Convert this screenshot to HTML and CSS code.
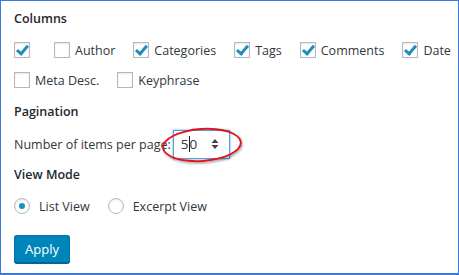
FILE: index.html
```html
<!DOCTYPE html>
<html lang="en">
<head>
  <meta charset="UTF-8">
  <title>Screen Options</title>
  <link rel="stylesheet" href="styles.css">
</head>
<body>
  <div class="panel">
    <h3>Columns</h3>
    <div class="opts">
      <label class="opt bare"><span class="cb on"></span></label>
      <label class="opt"><span class="cb"></span>Author</label>
      <label class="opt"><span class="cb on"></span>Categories</label>
      <label class="opt"><span class="cb on"></span>Tags</label>
      <label class="opt"><span class="cb on"></span>Comments</label>
      <label class="opt"><span class="cb on"></span>Date</label>
    </div>
    <div class="opts">
      <label class="opt"><span class="cb"></span>Meta Desc.</label>
      <label class="opt"><span class="cb"></span>Keyphrase</label>
    </div>

    <h3>Pagination</h3>
    <div class="per-page">
      <span>Number of items per page:</span>
      <div class="num-wrap">
        <div class="num"><span class="val">5<i class="caret"></i>0</span>
          <svg class="spin" width="8" height="12" viewBox="0 0 8 12"><path d="M4 1L7.5 5H0.5Z M4 11L7.5 7H0.5Z" fill="#444"/></svg>
        </div>
        <div class="ring"></div>
      </div>
    </div>

    <h3 class="mode">View Mode</h3>
    <div class="opts">
      <label class="opt"><span class="rd on"></span>List View</label>
      <label class="opt"><span class="rd"></span>Excerpt View</label>
    </div>

    <button class="btn-apply">Apply</button>
  </div>
</body>
</html>
```

FILE: styles.css
```css
*{box-sizing:border-box}
body{margin:0;font-family:'Open Sans','Noto Sans',sans-serif;font-size:12.5px;color:#32373c;background:#fff}
.panel{width:459px;height:275px;border:1px solid #3b78d8;border-bottom-width:2px;padding:9px 13px 0 13px}
h3{margin:0;font-size:12.5px;font-weight:600;color:#23282d;line-height:18px}
.opts{display:flex;align-items:center;margin-top:13px;height:18px}
.opts+.opts{margin-top:12px}
.opt{display:flex;align-items:center;margin-right:18px;white-space:nowrap}
.opt.bare{margin-right:24px}
.cb,.rd{width:16px;height:16px;border:1px solid #b4b9be;background:#fff;box-shadow:inset 0 1px 2px rgba(0,0,0,.1);margin-right:5px;position:relative;flex:none}
.bare .cb{margin-right:0}
.cb.on::after{content:"";position:absolute;left:4px;top:0px;width:4px;height:9px;border:solid #1e8cbe;border-width:0 3px 3px 0;transform:rotate(40deg)}
.rd{border-radius:50%;margin-right:9px}
.rd.on::after{content:"";position:absolute;left:4px;top:4px;width:6px;height:6px;border-radius:50%;background:#1e8cbe}
.opts+h3{margin-top:14px}
.per-page{display:flex;align-items:center;margin-top:9px;height:28px}
.num-wrap{position:relative;margin-left:2px}
.num{width:57px;height:29px;border:1px solid #5b9dd9;box-shadow:0 0 2px rgba(30,140,190,.8);display:flex;align-items:center;justify-content:space-between;padding:0 10px 0 7px;background:#fff}
.val{position:relative;font-size:13.5px}
.caret{display:inline-block;width:1px;height:16px;background:#222;vertical-align:-3px}
.ring{position:absolute;left:-11px;top:-2px;width:80px;height:34px;border:2px solid #e0141e;border-radius:50%;box-shadow:1px 2px 2px rgba(0,0,0,.25);transform:rotate(-4deg)}
h3.mode{margin-top:8px}
.btn-apply{display:block;margin-top:20px;background:#0085ba;border:1px solid #0073aa;border-bottom-color:#006799;color:#fff;font-family:inherit;font-size:13px;padding:0 10px;height:28px;border-radius:3px;box-shadow:0 1px 0 #006799}
```
